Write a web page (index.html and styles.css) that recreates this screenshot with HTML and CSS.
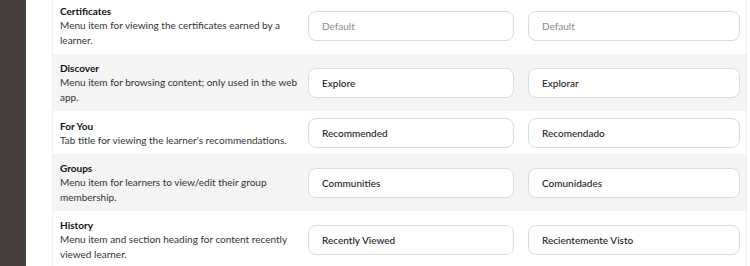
FILE: index.html
```html
<!DOCTYPE html>
<html>
<head>
<meta charset="utf-8">
<link rel="stylesheet" href="styles.css">
</head>
<body>
<div class="page">
  <aside class="sidebar"></aside>
  <main class="content">
    <div class="list">
      <div class="row">
        <div class="info">
          <div class="title">Certificates</div>
          <div class="desc">Menu item for viewing the certificates earned by a learner.</div>
        </div>
        <div class="field placeholder">Default</div>
        <div class="field placeholder">Default</div>
      </div>
      <div class="row alt">
        <div class="info">
          <div class="title">Discover</div>
          <div class="desc">Menu item for browsing content; only used in the web app.</div>
        </div>
        <div class="field">Explore</div>
        <div class="field">Explorar</div>
      </div>
      <div class="row">
        <div class="info">
          <div class="title">For You</div>
          <div class="desc">Tab title for viewing the learner's recommendations.</div>
        </div>
        <div class="field">Recommended</div>
        <div class="field">Recomendado</div>
      </div>
      <div class="row alt">
        <div class="info">
          <div class="title">Groups</div>
          <div class="desc">Menu item for learners to view/edit their group membership.</div>
        </div>
        <div class="field">Communities</div>
        <div class="field">Comunidades</div>
      </div>
      <div class="row">
        <div class="info">
          <div class="title">History</div>
          <div class="desc">Menu item and section heading for content recently viewed learner.</div>
        </div>
        <div class="field">Recently Viewed</div>
        <div class="field">Recientemente Visto</div>
      </div>
    </div>
  </main>
</div>
</body>
</html>
```
FILE: styles.css
```css
html, body {
  margin: 0;
  padding: 0;
  background: #ffffff;
  overflow: hidden;
}
body {
  font-family: Lato, "Liberation Sans", sans-serif;
  color: #1f1f1f;
}
.page {
  display: flex;
  height: 266px;
}
.sidebar {
  width: 26px;
  flex: none;
  background: #473e3d;
}
.content {
  flex: 1;
  padding-left: 26px;
  padding-right: 3px;
}
.list {
  margin-top: -3px;
  border-left: 1px solid #f0f0f0;
  border-right: 1px solid #f0f0f0;
}
.row {
  display: flex;
  align-items: center;
  padding: 7px 6px 6px 7px;
  background: #ffffff;
}
.row.alt {
  background: #f4f4f4;
}
.info {
  flex: none;
  width: 240px;
  margin-right: 8px;
}
.title {
  font-size: 10px;
  font-weight: 700;
  line-height: 14px;
  color: #111;
}
.desc {
  font-size: 10px;
  line-height: 15px;
  color: #333;
}
.field {
  flex: none;
  width: 206px;
  box-sizing: border-box;
  height: 30px;
  border: 1px solid #dcdcdc;
  border-radius: 8px;
  background: #fff;
  padding: 0 13px;
  display: flex;
  align-items: center;
  font-size: 10px;
  font-weight: 500;
  color: #222;
}
.field + .field {
  width: 212px;
  margin-left: 14px;
}
.field.placeholder {
  font-weight: 400;
  color: #8a8a8a;
}
```
